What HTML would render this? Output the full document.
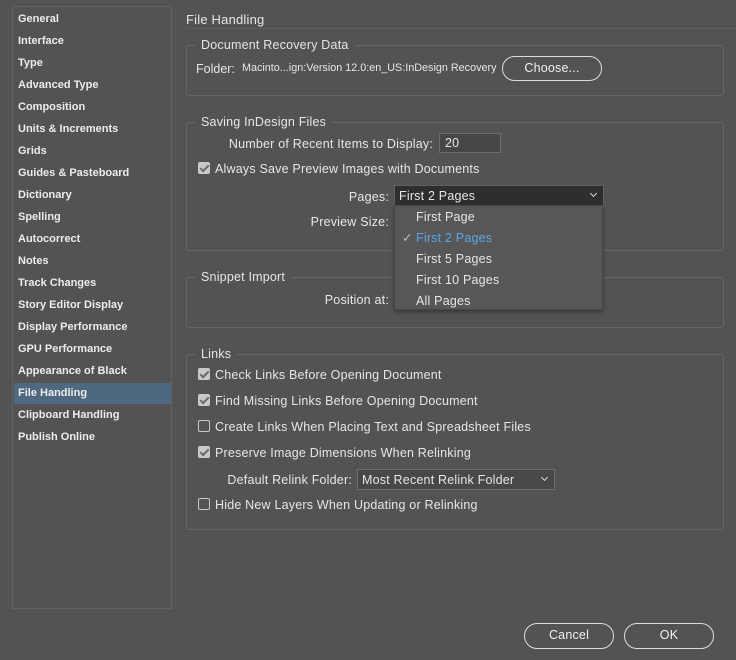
<!DOCTYPE html>
<html><head><style>
*{margin:0;padding:0;box-sizing:border-box}
body{width:736px;height:660px;background:#535353;font-family:"Liberation Sans",sans-serif;color:#e6e6e6;position:relative;overflow:hidden;font-size:12.5px;letter-spacing:.2px}
.a{position:absolute;white-space:nowrap}
.r{position:absolute;white-space:nowrap;text-align:right}
.side{left:12px;top:6px;width:160px;height:603px;border:1px solid #616161}
.si{position:absolute;left:5px;font-size:11px;font-weight:bold;color:#ececec;letter-spacing:0}
.sel{position:absolute;left:1px;width:157px;top:376px;height:21px;background:#4e6880}
.box{position:absolute;left:186px;width:538px;border:1px solid #666;border-radius:3px}
.lbl{position:absolute;background:#535353;padding:0 6px;left:8px;top:-8px;font-size:12.5px}
.cb{position:absolute;width:12px;height:12px;border:1px solid #c8c8c8;border-radius:2px;left:198px}
.cb.on{background:#c9c9c9;border-color:#c9c9c9}
.cb.on::after{content:"";position:absolute;left:3px;top:0px;width:3px;height:7px;border:solid #6a6a6a;border-width:0 2px 2px 0;transform:rotate(45deg)}
.btn{position:absolute;border:1.5px solid #dcdcdc;border-radius:13px;text-align:center;font-size:12.5px;color:#f0f0f0}
.chev{position:absolute;width:5px;height:5px;border:solid #ddd;border-width:0 1px 1px 0;transform:rotate(45deg)}
</style></head><body>
<div class="a side">
<div class="sel"></div>
<div class="si" style="top:6px">General</div>
<div class="si" style="top:28px">Interface</div>
<div class="si" style="top:50px">Type</div>
<div class="si" style="top:72px">Advanced Type</div>
<div class="si" style="top:94px">Composition</div>
<div class="si" style="top:116px">Units &amp; Increments</div>
<div class="si" style="top:138px">Grids</div>
<div class="si" style="top:160px">Guides &amp; Pasteboard</div>
<div class="si" style="top:182px">Dictionary</div>
<div class="si" style="top:204px">Spelling</div>
<div class="si" style="top:226px">Autocorrect</div>
<div class="si" style="top:248px">Notes</div>
<div class="si" style="top:270px">Track Changes</div>
<div class="si" style="top:292px">Story Editor Display</div>
<div class="si" style="top:314px">Display Performance</div>
<div class="si" style="top:336px">GPU Performance</div>
<div class="si" style="top:358px">Appearance of Black</div>
<div class="si" style="top:380px">File Handling</div>
<div class="si" style="top:402px">Clipboard Handling</div>
<div class="si" style="top:424px">Publish Online</div>
</div>

<div class="a" style="left:186px;top:12px;font-size:13px">File Handling</div>
<div class="a" style="left:186px;top:28px;width:550px;height:1px;background:#5d5d5d"></div>

<div class="box" style="top:45px;height:51px"><div class="lbl">Document Recovery Data</div></div>
<div class="a" style="left:196px;top:62px;font-size:12.5px;letter-spacing:0">Folder:</div>
<div class="a" style="left:242px;top:62px;font-size:10.8px;letter-spacing:0">Macinto...ign:Version 12.0:en_US:InDesign Recovery</div>
<div class="btn" style="left:502px;top:56px;width:100px;height:25px;line-height:22px">Choose...</div>

<div class="box" style="top:122px;height:129px"><div class="lbl">Saving InDesign Files</div></div>
<div class="r" style="right:303px;top:137px">Number of Recent Items to Display:</div>
<div class="a" style="left:439px;top:133px;width:62px;height:20px;background:#474747;border:1px solid #6e6e6e;padding:2px 0 0 5px">20</div>
<div class="cb on" style="top:162px"></div>
<div class="a" style="left:215px;top:162px">Always Save Preview Images with Documents</div>
<div class="r" style="right:347px;top:190px">Pages:</div>
<div class="a" style="left:394px;top:185px;width:210px;height:21px;background:#2e2e2e;border:1px solid #606060;padding:3px 0 0 4px">First 2 Pages</div>
<div class="chev" style="left:591px;top:191px"></div>
<div class="r" style="right:347px;top:215px">Preview Size:</div>

<div class="box" style="top:277px;height:51px"><div class="lbl">Snippet Import</div></div>
<div class="r" style="right:347px;top:293px">Position at:</div>

<div class="a" style="left:394px;top:205px;width:209px;height:105px;background:#575757;border:1px solid #464646;box-shadow:0 2px 4px rgba(0,0,0,.35)">
<div class="a" style="left:21px;top:4px">First Page</div>
<div class="a" style="left:7px;top:24px;color:#bdbdbd">✓</div>
<div class="a" style="left:21px;top:25px;color:#5aa5ea">First 2 Pages</div>
<div class="a" style="left:21px;top:46px">First 5 Pages</div>
<div class="a" style="left:21px;top:67px">First 10 Pages</div>
<div class="a" style="left:21px;top:88px">All Pages</div>
</div>

<div class="box" style="top:354px;height:176px"><div class="lbl">Links</div></div>
<div class="cb on" style="top:368px"></div>
<div class="a" style="left:215px;top:368px">Check Links Before Opening Document</div>
<div class="cb on" style="top:394px"></div>
<div class="a" style="left:215px;top:394px">Find Missing Links Before Opening Document</div>
<div class="cb" style="top:420px"></div>
<div class="a" style="left:215px;top:420px">Create Links When Placing Text and Spreadsheet Files</div>
<div class="cb on" style="top:446px"></div>
<div class="a" style="left:215px;top:446px">Preserve Image Dimensions When Relinking</div>
<div class="r" style="right:384px;top:473px">Default Relink Folder:</div>
<div class="a" style="left:357px;top:469px;width:198px;height:21px;background:#484848;border:1px solid #6e6e6e;padding:3px 0 0 4px">Most Recent Relink Folder</div>
<div class="chev" style="left:542px;top:475px"></div>
<div class="cb" style="top:498px"></div>
<div class="a" style="left:215px;top:498px">Hide New Layers When Updating or Relinking</div>

<div class="btn" style="left:524px;top:623px;width:90px;height:26px;line-height:23px">Cancel</div>
<div class="btn" style="left:624px;top:623px;width:90px;height:26px;line-height:23px">OK</div>
</body></html>
